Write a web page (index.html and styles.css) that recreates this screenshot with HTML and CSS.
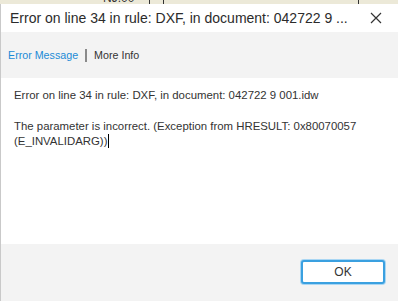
FILE: index.html
```html
<!DOCTYPE html>
<html>
<head>
<meta charset="utf-8">
<link rel="stylesheet" href="styles.css">
</head>
<body>
<div class="behind">
  <span class="behind-text">NJ.00</span>
  <span class="behind-line l1"></span>
  <span class="behind-line l2"></span>
  <span class="behind-line l3"></span>
</div>
<div class="window">
  <div class="titlebar">
    <span class="title">Error on line 34 in rule: DXF, in document: 042722 9 ...</span>
    <svg class="close" width="12" height="12" viewBox="0 0 12 12"><path d="M1 1L11 11M11 1L1 11" stroke="#333" stroke-width="1.2" fill="none"/></svg>
  </div>
  <div class="tabs">
    <span class="tab active">Error Message</span>
    <span class="sep"></span>
    <span class="tab">More Info</span>
  </div>
  <div class="content">
    <p class="line">Error on line 34 in rule: DXF, in document: 042722 9 001.idw</p>
    <p class="line gap">The parameter is incorrect. (Exception from HRESULT: 0x80070057<br>(E_INVALIDARG))<span class="caret"></span></p>
  </div>
  <div class="footer">
    <button class="ok">OK</button>
  </div>
</div>
</body>
</html>
```

FILE: styles.css
```css
html, body {
  margin: 0;
  padding: 0;
  width: 398px;
  height: 301px;
  overflow: hidden;
  font-family: "Segoe UI", "Liberation Sans", Arial, sans-serif;
}
.behind {
  height: 4px;
  background: #ece9d8;
  position: relative;
  overflow: hidden;
}
.behind-text {
  position: absolute;
  left: 103px;
  top: -9px;
  font-size: 12px;
  color: #333;
}
.behind-line {
  position: absolute;
  top: 0;
  width: 1px;
  height: 4px;
  background: #333;
}
.l1 { left: 149px; }
.l2 { left: 163px; }
.l3 { left: 358px; }
.window {
  height: 297px;
  display: flex;
  flex-direction: column;
  border-left: 1px solid #c9c9c9;
  background: #fff;
}
.titlebar {
  height: 28px;
  display: flex;
  align-items: center;
  justify-content: space-between;
  padding: 0 16px 0 9px;
  background: #fff;
}
.title {
  font-size: 14px;
  color: #2b2b2b;
  white-space: nowrap;
}
.close { display: block; }
.tabs {
  height: 46px;
  background: #f3f3f3;
  display: flex;
  align-items: center;
  padding: 0 0 0 7px;
  font-size: 10.7px;
  color: #333;
}
.tab.active { color: #1b8bd6; }
.sep {
  width: 2px;
  height: 13px;
  background: #8a8a8a;
  margin: 0 7px;
}
.content {
  height: 166px;
  background: #fff;
  padding: 10px 13px 0;
  box-sizing: border-box;
  font-size: 11.4px;
  color: #333;
}
.line {
  margin: 0;
  line-height: 15px;
}
.gap { margin-top: 16px; }
.caret {
  display: inline-block;
  width: 1px;
  height: 14px;
  background: #000;
  vertical-align: -3px;
  margin-left: 1px;
}
.footer {
  flex: 1;
  background: #f3f3f3;
  display: flex;
  justify-content: flex-end;
  padding: 16px 13px 0 0;
  box-sizing: border-box;
  align-items: flex-start;
}
.ok {
  width: 84px;
  height: 24px;
  border: 2px solid #3aa0e0;
  border-radius: 3px;
  box-shadow: 0 0 0 1px #a9d6f3;
  background: #fff;
  font-family: inherit;
  font-size: 12px;
  color: #333;
  padding: 0;
}
```
